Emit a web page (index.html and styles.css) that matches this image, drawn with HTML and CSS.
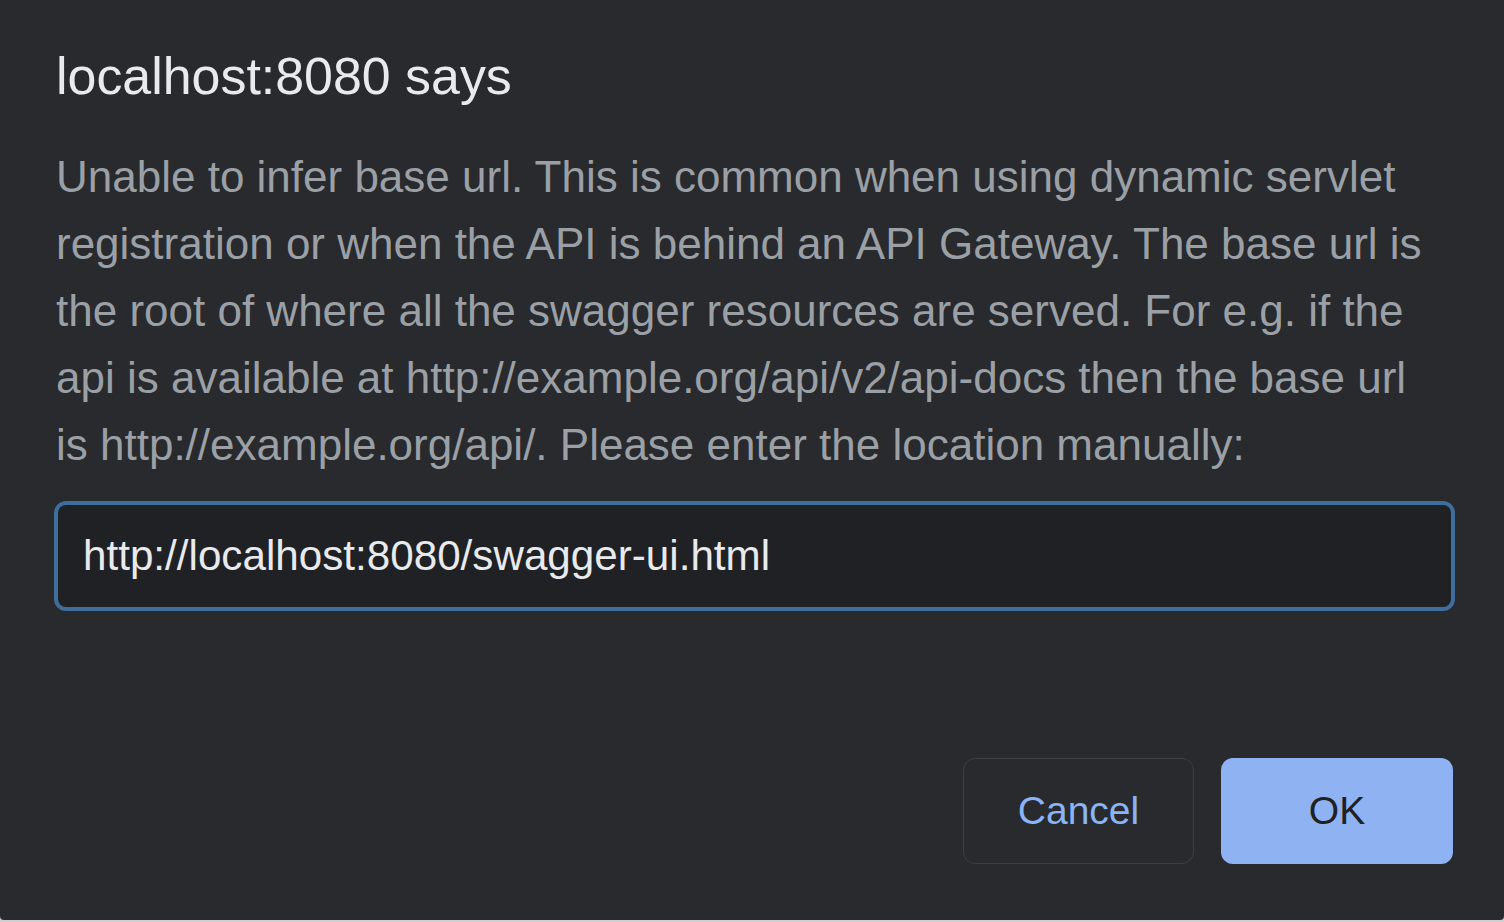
FILE: index.html
```html
<!DOCTYPE html>
<html lang="en">
<head>
<meta charset="utf-8">
<title>localhost:8080 says</title>
<link rel="stylesheet" href="styles.css">
</head>
<body>
<div class="dialog">
  <h1 class="title">localhost:8080 says</h1>
  <p class="message">Unable to infer base url. This is common when using dynamic servlet<br>registration or when the API is behind an API Gateway. The base url is<br>the root of where all the swagger resources are served. For e.g. if the<br>api is available at http://example.org/api/v2/api-docs then the base url<br>is http://example.org/api/. Please enter the location manually:</p>
  <div class="field">http://localhost:8080/swagger-ui.html</div>
  <div class="actions">
    <button class="btn btn-cancel">Cancel</button>
    <button class="btn btn-ok">OK</button>
  </div>
</div>
</body>
</html>
```

FILE: styles.css
```css
html, body {
  margin: 0;
  padding: 0;
}
body {
  width: 1504px;
  height: 922px;
  background: #cfcfd1;
  font-family: "Liberation Sans", Arial, sans-serif;
  overflow: hidden;
}
.dialog {
  box-sizing: border-box;
  width: 1504px;
  height: 920px;
  background: #292a2d;
  padding: 46px 49px 56px 54px;
  display: flex;
  flex-direction: column;
  border-radius: 0 0 4px 4px;
}
.title {
  margin: 0;
  font-size: 51.9px;
  line-height: 60px;
  font-weight: 400;
  color: #e8eaed;
  padding-left: 2px;
}
.message {
  margin: 37px 0 0 0;
  font-size: 44px;
  line-height: 67px;
  color: #9aa0a6;
  white-space: nowrap;
  padding-left: 2px;
}
.field {
  box-sizing: border-box;
  margin-top: 23px;
  height: 110px;
  border: 4px solid #3f6d9c;
  border-radius: 12px;
  background: #202124;
  color: #e8eaed;
  font-size: 42.2px;
  padding-left: 25px;
  display: flex;
  align-items: center;
}
.actions {
  margin-top: auto;
  display: flex;
  justify-content: flex-end;
  gap: 27px;
  padding-right: 2px;
}
.btn {
  box-sizing: border-box;
  width: 231px;
  height: 106px;
  border-radius: 12px;
  font-family: "Liberation Sans", Arial, sans-serif;
  font-size: 39px;
  cursor: pointer;
}
.btn-cancel {
  background: #292a2d;
  border: 1px solid #3c3e42;
  color: #8ab4f8;
}
.btn-ok {
  width: 232px;
  background: #8fb3f2;
  border: none;
  color: #202124;
}
```
